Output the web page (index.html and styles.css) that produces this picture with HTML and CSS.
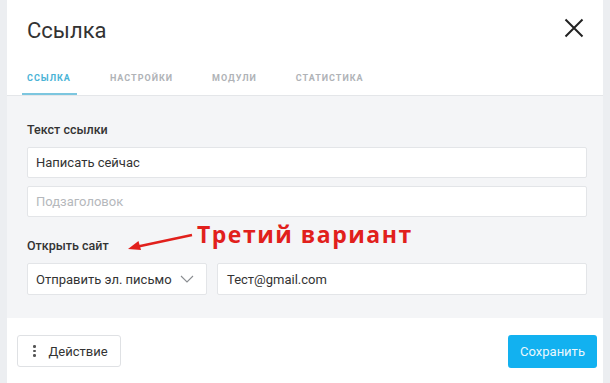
FILE: index.html
```html
<!DOCTYPE html>
<html lang="ru">
<head>
<meta charset="utf-8">
<link rel="stylesheet" href="styles.css">
</head>
<body>
<div class="modal">
  <header class="head">
    <div class="title-row">
      <h1 class="title">Ссылка</h1>
      <svg class="close" width="20" height="20" viewBox="0 0 20 20"><path d="M1.5 1.5L18.5 18.5M18.5 1.5L1.5 18.5" stroke="#222" stroke-width="2" fill="none"/></svg>
    </div>
    <nav class="tabs">
      <span class="tab active">ССЫЛКА</span>
      <span class="tab">НАСТРОЙКИ</span>
      <span class="tab">МОДУЛИ</span>
      <span class="tab">СТАТИСТИКА</span>
    </nav>
  </header>
  <main class="body">
    <div class="label">Текст ссылки</div>
    <div class="field">Написать сейчас</div>
    <div class="field placeholder">Подзаголовок</div>
    <div class="label label2">Открыть сайт</div>
    <div class="row">
      <div class="field select">Отправить эл. письмо
        <svg width="14" height="8" viewBox="0 0 14 8"><path d="M1 1L7 7L13 1" stroke="#8a8d91" stroke-width="1.1" fill="none"/></svg>
      </div>
      <div class="field grow">Тест@gmail.com</div>
    </div>
    <div class="note">
      <svg class="arrow" width="66" height="18" viewBox="0 0 66 18"><path d="M64 2L10 13.5" stroke="#e1201c" stroke-width="2.6" fill="none"/><path d="M0 16L10.5 8L13 17Z" fill="#e1201c"/></svg>
      <span>Третий вариант</span>
    </div>
  </main>
  <footer class="foot">
    <button class="btn action"><span class="dots"><i></i><i></i><i></i></span>Действие</button>
    <button class="btn save">Сохранить</button>
  </footer>
</div>
</body>
</html>
```
FILE: styles.css
```css
* { box-sizing: border-box; }
html, body { margin: 0; padding: 0; }
body {
  background: #eceef1;
  font-family: Roboto, "Noto Sans", sans-serif;
  color: #333;
  width: 610px;
  height: 383px;
  overflow: hidden;
}
.modal {
  margin: 0 7px;
  width: 596px;
  height: 383px;
  background: #fff;
  display: flex;
  flex-direction: column;
}
.head {
  height: 96px;
  flex: none;
  border-bottom: 1px solid #e4e6e9;
  padding: 0 0 0 12px;
  display: flex;
  flex-direction: column;
}
.title-row {
  display: flex;
  align-items: flex-start;
  justify-content: space-between;
  padding: 18px 19px 0 8px;
  height: 44px;
}
.title {
  margin: 0;
  font-size: 22px;
  font-weight: 400;
  color: #333;
  line-height: 26px;
}
.close { margin-top: 0px; }
.tabs {
  display: flex;
  gap: 28px;
  margin: 20px 0 0 3px;
}
.tab {
  font-size: 9px;
  font-weight: 700;
  letter-spacing: 1px;
  color: #b0b3b7;
  padding: 10px 6px 0 5px;
  position: relative;
  height: 31px;
  line-height: 9px;
}
.tab.active { color: #4ab3d6; }
.tab.active::after {
  content: "";
  position: absolute;
  left: 0;
  right: 0;
  bottom: 0;
  height: 2px;
  background: #7cc6df;
}
.body {
  background: #f4f5f7;
  height: 222px;
  flex: none;
  padding: 27px 16px 0 20px;
  position: relative;
}
.label {
  font-size: 12.5px;
  font-weight: 500;
  color: #333;
  line-height: 14px;
  margin-bottom: 10px;
}
.label2 { margin-top: 22px; }
.field {
  height: 31px;
  background: #fff;
  border: 1px solid #e3e5e8;
  border-radius: 2px;
  font-size: 13px;
  color: #333;
  padding: 0 8px;
  display: flex;
  align-items: center;
  margin-bottom: 8px;
}
.placeholder { color: #b5b8bc; }
.row { display: flex; gap: 10px; }
.row .field { height: 32px; }
.select {
  width: 180px;
  justify-content: space-between;
  flex: none;
  padding-right: 12px;
}
.grow { flex: 1; padding-left: 9px; }
.note {
  position: absolute;
  left: 121px;
  top: 127px;
  display: flex;
  align-items: flex-start;
  gap: 3px;
}
.note span {
  font-family: "Open Sans", "Noto Sans", sans-serif;
  font-weight: 700;
  font-size: 23px;
  letter-spacing: 1.5px;
  color: #e1201c;
  line-height: 28px;
  margin-top: -3px;
}
.arrow { margin-top: 10px; }
.foot {
  flex: 1;
  display: flex;
  justify-content: space-between;
  align-items: flex-start;
  padding: 17px 6px 0 10px;
}
.btn {
  height: 32px;
  font-family: Roboto, "Noto Sans", sans-serif;
  font-size: 13px;
  border-radius: 3px;
  cursor: pointer;
}
.action {
  width: 104px;
  background: #fff;
  border: 1px solid #dfe1e4;
  color: #333;
  display: flex;
  align-items: center;
  padding: 0 0 0 15px;
  gap: 13px;
}
.dots { display: flex; flex-direction: column; gap: 2px; }
.dots i { display: block; width: 2.5px; height: 2.5px; background: #555; border-radius: 50%; }
.save {
  width: 89px;
  height: 33px;
  background: #12b1f0;
  border: none;
  color: #eaf7fd;
}
```
